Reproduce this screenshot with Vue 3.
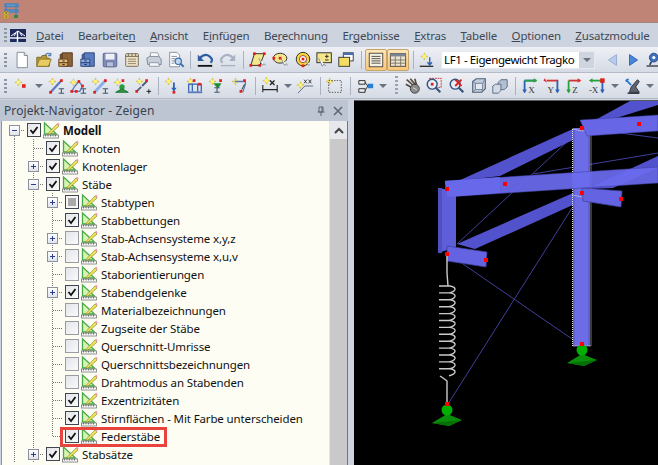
<script setup>
import { computed } from "vue";

const star = (x, y) =>
  `<polygon points="${x},${y - 4} ${x + 1},${y - 1} ${x + 4},${y} ${x + 1},${y + 1} ${x},${y + 4} ${x - 1},${y + 1} ${x - 4},${y} ${x - 1},${y - 1}" fill="#f7e84a" stroke="#b9a92a" stroke-width=".5"/><circle cx="${x}" cy="${y}" r="2" fill="#fff27a"/>`;
const dot = (x, y, s = 3) => `<rect x="${x - s / 2}" y="${y - s / 2}" width="${s}" height="${s}" fill="#e0201c"/>`;
const ibeam = (x, y) =>
  `<path d="M${x - 3} ${y}h6M${x} ${y}v5M${x - 3} ${y + 5}h6" stroke="#44566e" stroke-width="1.2" fill="none"/>`;

const icons = {
  new: `<path d="M4.5 1.5h8l3.5 3.5v13.5h-11.500z" fill="#fff" stroke="#7d8592"/><path d="M12.500 1.500v3.500h3.500" fill="#e4e8ee" stroke="#7d8592"/>`,
  open: `<path d="M2 7h5l1 -2h5v3h3v9h-14z" fill="#b99a3a" stroke="#7a6420"/><path d="M2 17l3-8h13l-3 8z" fill="#e8cc62" stroke="#8a7428"/><path d="M11 5q3-4 6-1.500M17.500 2v3h-3" fill="none" stroke="#5c85b8" stroke-width="1.400"/>`,
  cab: `<path d="M6 2h11v15h-11z" fill="#8d6238" stroke="#4f351b"/><path d="M6 2l-3 2v13h3z" fill="#6d4a28"/><path d="M2 9h10v4h-10z" fill="#e9c27c" stroke="#5c3f20"/><path d="M2 13h10v4h-10z" fill="#d6a860" stroke="#5c3f20"/><rect x="6" y="10.500" width="2.500" height="1" fill="#222"/><rect x="6" y="14.500" width="2.500" height="1" fill="#222"/>`,
  cabBlue: `<path d="M6 2h11v15h-11z" fill="#5a7cc0" stroke="#2c4274"/><path d="M6 2l-3 2v13h3z" fill="#3f5c9a"/><path d="M2 9h10v4h-10z" fill="#8eaee8" stroke="#2c4274"/><path d="M2 13h10v4h-10z" fill="#7295d8" stroke="#2c4274"/><rect x="6" y="10.500" width="2.500" height="1" fill="#123"/><rect x="6" y="14.500" width="2.500" height="1" fill="#123"/>`,
  save: `<rect x="2.500" y="2.500" width="15" height="15" rx="1" fill="#7f8cc0" stroke="#56608e"/><rect x="5" y="3" width="10" height="6.500" fill="#eef0f6"/><rect x="6" y="12" width="8" height="5.500" fill="#b8bfd8" stroke="#6a7398"/>`,
  notes: `<rect x="3" y="3" width="14" height="14" rx="1" fill="#efe3c8" stroke="#6f6350"/><path d="M3 6h14" stroke="#6f6350"/><path d="M5.500 9h9M5.500 11.500h9M5.500 14h9" stroke="#8b7d62"/><path d="M6 3v3M10 3v3M14 3v3" stroke="#6f6350"/>`,
  print: `<path d="M6 2h8l2 5h-10z" fill="#fff" stroke="#8d95a3"/><path d="M2 8l3-2h10l3 3v6h-15z" fill="#c9d0dc" stroke="#7c8493"/><path d="M5 13h10l1 4h-11z" fill="#f5f6f8" stroke="#8d95a3"/>`,
  preview: `<path d="M3 1.500h8l3 3v13h-11z" fill="#fff" stroke="#80899a"/><path d="M5 6h6M5 8.500h4M5 11h4M5 13.500h3" stroke="#7a8290"/><circle cx="12.500" cy="11.500" r="3.500" fill="#bcd8f2" stroke="#3c6ea8" stroke-width="1.300"/><path d="M15 14l3.500 3.500" stroke="#3c6ea8" stroke-width="2"/>`,
  undo: `<path d="M4 8q6-6 11-2t1 7" fill="none" stroke="#2d5ca0" stroke-width="2.400"/><path d="M2 4v7h7z" fill="#2d5ca0"/><rect x="2" y="15.500" width="16" height="2" fill="#111"/>`,
  redo: `<path d="M16 8q-6-6-11-2t-1 7" fill="none" stroke="#a9b2c2" stroke-width="2.400"/><path d="M18 4v7h-7z" fill="#a9b2c2"/><rect x="2" y="15.500" width="16" height="1.500" fill="#a9b2c2"/>`,
  plane: `<path d="M6 3h11l-5 13h-10z" fill="#f4e68a" stroke="#222"/>${dot(6, 3)}${dot(17, 3)}${dot(12, 16)}${dot(2, 16)}<path d="M11 8l4 8 1.500-2 2 2" fill="#fff" stroke="#7c8493"/>`,
  circ: `<ellipse cx="9" cy="8" rx="7.500" ry="5.500" fill="#f4e68a" stroke="#222"/>${dot(2, 8)}${dot(9, 8)}<path d="M10 8l4 8 1.500-2 2 2" fill="#fff" stroke="#7c8493"/>`,
  ring: `<circle cx="10" cy="9" r="7.500" fill="#f2d83c" stroke="#222"/><circle cx="10" cy="9" r="4" fill="#fff" stroke="#a33"/>${dot(10, 9)}${dot(10, 16.500)}<path d="M13 10l3 6 1.500-1" fill="#fff" stroke="#7c8493"/>`,
  note: `<rect x="1" y="2" width="16" height="11" fill="#f4e68a" stroke="#222"/><path d="M10 6h4M12 4v4M10 10h4" stroke="#222"/><path d="M3 8l4 9 1.500-2.500 2.500 2" fill="#fff" stroke="#7c8493"/>`,
  windows: `<rect x="7" y="2" width="11" height="9" fill="#fff" stroke="#333"/><rect x="7" y="2" width="11" height="2.500" fill="#4a6fb0"/><rect x="2" y="7" width="12" height="10" fill="#f4dd62" stroke="#333"/>`,
  nav: `<rect x="2.500" y="2.500" width="15" height="15" fill="#f4f1e6" stroke="#4a4238"/><path d="M5 6h10M5 8.500h10M5 11h10M5 13.500h10" stroke="#4a4238"/>`,
  table: `<rect x="1.500" y="3" width="17" height="14" fill="#ece5d3" stroke="#4a4238"/><rect x="1.500" y="3" width="17" height="3" fill="#7c8594"/><path d="M7 6v11M13 6v11M2 10h16M2 13.500h16" stroke="#7a7060"/>`,
  load: `${star(7, 6)}<path d="M13 7v8M10.500 12.500l2.500 3 2.500-3" fill="none" stroke="#2c62b4" stroke-width="1.500"/><path d="M2 17h15" stroke="#333" stroke-width="1.500"/>`,
  left: `<path d="M15 4v12l-9-6z" fill="#b9cbea" stroke="#93a9d0"/>`,
  right: `<path d="M5 4v12l9-6z" fill="#4a86d8" stroke="#2c62b4"/>`,
  help: `<circle cx="11" cy="7" r="5.500" fill="#3d70c0" stroke="#1c3c78"/><circle cx="11" cy="7" r="2" fill="#fff"/><path d="M8 12l-2 4" stroke="#1c3c78" stroke-width="2"/><path d="M2 17.500h16" stroke="#222" stroke-width="1.500"/>`,
  nodeNew: `${star(6, 6)}${dot(12, 10, 4)}`,
  member: `${star(6, 5)}<path d="M4 17l12-13" stroke="#5a78bc" stroke-width="2.400"/>${dot(4, 17)}${dot(16, 4)}${ibeam(16, 13)}`,
  poly: `${star(5, 6)}<path d="M3 16l3-5 5-6 4 5-3 6z" fill="none" stroke="#5a78bc" stroke-width="1.400"/>${dot(3, 16)}${dot(11, 5)}${dot(15, 10)}${dot(8, 16)}${ibeam(16, 13)}`,
  member2: `${star(5, 5)}<path d="M4 17l12-13" stroke="#8ab0e8" stroke-width="3.200"/>${dot(16, 4)}${dot(4, 17)}${ibeam(16, 13)}`,
  support: `${star(5, 6)}${dot(11, 4)}<circle cx="10" cy="11" r="3" fill="#2a9a42"/><path d="M3 17l7-4 7 4z" fill="#2a9a42" stroke="#14702c"/>`,
  chain: `${star(6, 5)}<path d="M3 16l5-5M9 10l5-5" stroke="#4c5e7e" stroke-width="2"/>${dot(3, 16)}${dot(14, 4)}<path d="M14 16h5M16.500 13.500v5" stroke="#111"/>`,
  down: `${star(5, 5)}<path d="M11 6v9" stroke="#2c62b4" stroke-width="2"/><path d="M8 12l3 4 3-4" fill="#2c62b4"/>${dot(11, 17)}`,
  frame: `${star(5, 5)}<path d="M3 16v-8h14v8M7 8v8M13 8v8" fill="none" stroke="#2c62b4" stroke-width="1.400"/><path d="M2 17h16" stroke="#5a78bc" stroke-width="2"/>${dot(9, 4)}${dot(15, 8)}`,
  tree: `${star(5, 5)}<path d="M6 7h9l-4 6z" fill="#1f8a36"/>${dot(14, 4)}${ibeam(10, 12)}`,
  link: `${star(5, 5)}<path d="M4 5h12v3l-3 9" fill="none" stroke="#5a78bc" stroke-width="1.400"/>${dot(15, 4)}${dot(11, 16)}<path d="M15 8l-3 6" stroke="#222"/>`,
  dim: `${star(6, 4)}<path d="M10 4l5 5M15 4l-5 5" stroke="#222" stroke-width="1.500"/><path d="M2 9v8M18 9v8M2 14h16" stroke="#222" stroke-width="1.200"/>`,
  xx: `${star(5, 9)}<path d="M2 18l8-8h9" stroke="#55657e" fill="none"/><path d="M9 3l3 4M12 3l-3 4M14 3l3 4M17 3l-3 4" stroke="#333"/>`,
  grid: `${star(4, 5)}<rect x="3" y="4" width="14" height="13" fill="none" stroke="#444" stroke-dasharray="1.500 1.500"/>`,
  swap: `<path d="M2 4h7v4h-7zM2 13h7v4h-7z" fill="#eceef3" stroke="#222"/><path d="M9 6l3 4M9 15l3-5" stroke="#222"/><rect x="12" y="7.500" width="6" height="5" fill="#2c7cd0"/>`,
  hand: `<path d="M3 3l8 7M7 2l6 7M12 2l2 7M2 8l7 4" stroke="#54483c" stroke-width="1.800"/><circle cx="12" cy="13" r="5" fill="#8d8d8d" stroke="#3c3c3c"/><path d="M10 12l4 2" stroke="#ddd"/>`,
  zoomArea: `<rect x="5" y="1.500" width="13" height="10" fill="none" stroke="#c22" stroke-dasharray="2 1"/><circle cx="8" cy="8" r="5.500" fill="#e6eef8" stroke="#34547e" stroke-width="1.600"/><path d="M12 12l5 5" stroke="#34547e" stroke-width="2.400"/>${dot(8, 8)}`,
  zoomX: `<circle cx="8" cy="8" r="5.500" fill="#e6eef8" stroke="#34547e" stroke-width="1.600"/><path d="M12 12l5 5" stroke="#34547e" stroke-width="2.400"/><path d="M8 3l7 7M15 3l-7 7" stroke="#d22" stroke-width="2"/>`,
  cube: `<path d="M3 5l4-3h10v11l-4 4h-10z" fill="#c3cddb" stroke="#4f6078" stroke-width="1.200"/><path d="M6 7h8v7h-8z" fill="#e4e9f0" stroke="#6c7c92"/><path d="M3 5l3 2M17 2l-3 5M3 17l3-3M13 17l1-3" stroke="#6c7c92"/>`,
  cubes: `<path d="M8 6l3-3h7v8l-3 3h-7z" fill="#b2bfd2" stroke="#56677e"/><path d="M2 10l3-2h6v7l-3 3h-6z" fill="#d4dbe6" stroke="#56677e"/>`,
  axX: `<path d="M4 17v-13M4 4h13" stroke="#2c62b4" stroke-width="2"/><path d="M4 4h13" stroke="#26a33a" stroke-width="2"/><path d="M1.500 14l2.500 4 2.500-4" fill="#2c62b4"/><path d="M14 1.500l4 2.500-4 2.500" fill="#26a33a"/><text x="8" y="18" class="ax">X</text>`,
  axY: `<path d="M4 4h13" stroke="#d23434" stroke-width="2"/><path d="M16 4v13" stroke="#2c62b4" stroke-width="2"/><path d="M2 1.500l-1.500 2.500 4 2.500z" fill="#d23434"/><path d="M13.500 14l2.500 4 2.500-4" fill="#2c62b4"/><text x="5" y="18" class="ax">Y</text>`,
  axZ: `<path d="M4 4h13" stroke="#d23434" stroke-width="2"/><path d="M4 4v13" stroke="#26a33a" stroke-width="2"/><path d="M14 1.500l4 2.500-4 2.500" fill="#d23434"/><path d="M1.500 14l2.500 4 2.500-4" fill="#26a33a"/><text x="8" y="18" class="ax">Z</text>`,
  axMx: `<path d="M3 4h13" stroke="#26a33a" stroke-width="2"/><path d="M16 4v13" stroke="#2c62b4" stroke-width="2"/><path d="M5 1.500l-4 2.500 4 2.500" fill="#26a33a"/>${dot(16, 4, 5)}<path d="M13.500 14l2.500 4 2.500-4" fill="#2c62b4"/><text x="1" y="18" class="ax">-X</text>`,
  iso: `<path d="M2 3l6 6M5 2l-3 3" stroke="#2c7cd0" stroke-width="2"/><path d="M8 11l7-8 2 2-4 6 4 6h-11z" fill="#5e6470" stroke="#2a2e36"/><path d="M4 18h13" stroke="#2a2e36" stroke-width="1.600"/>`,
};

const tb1 = [
  ["new", 22], ["open", 22], ["cab", 22], ["cabBlue", 22], ["save", 22], ["notes", 22], ["print", 22], ["preview", 22],
  ["|", 7], ["undo", 22], ["redo", 24], ["|", 6], ["plane", 24], ["circ", 22], ["ring", 22], ["note", 21], ["windows", 22], ["|", 8],
  ["nav", 22, true], ["table", 22, true], ["|", 8], ["load", 20],
];
const tb1End = [["left", 22], ["right", 22], ["help", 16]];
const tb2 = [
  ["nodeNew", 22], ["v", 12], ["member", 22], ["poly", 22], ["member2", 22], ["support", 21], ["chain", 22], ["|", 8],
  ["down", 21], ["frame", 23], ["tree", 22], ["link", 23], ["|", 8], ["dim", 22], ["v", 14], ["xx", 20], ["|", 10], ["grid", 20], ["|", 10],
  ["swap", 22], ["v", 12], [":", 14], ["hand", 20], ["zoomArea", 22], ["zoomX", 23], ["cube", 21], ["cubes", 22], ["|", 8],
  ["axX", 22], ["axY", 22], ["axZ", 21], ["axMx", 26], ["v", 10], ["iso", 25], ["v", 10],
];

const menu = [
  ["", "D", "atei"], ["Bearbeite", "n", ""], ["", "A", "nsicht"], ["E", "i", "nfügen"], ["Be", "r", "echnung"],
  ["Er", "g", "ebnisse"], ["", "E", "xtras"], ["", "T", "abelle"], ["", "O", "ptionen"], ["", "Z", "usatzmodule"],
];

// level, label, expander (+/-/""), check state, connector
const rows = [
  { l: 0, t: "Modell", x: "-", c: 1, bold: true },
  { l: 1, t: "Knoten", c: 1 },
  { l: 1, t: "Knotenlager", x: "+", c: 1 },
  { l: 1, t: "Stäbe", x: "-", c: 1 },
  { l: 2, t: "Stabtypen", x: "+", c: 2 },
  { l: 2, t: "Stabbettungen", c: 1 },
  { l: 2, t: "Stab-Achsensysteme x,y,z", x: "+", c: 0 },
  { l: 2, t: "Stab-Achsensysteme x,u,v", x: "+", c: 0 },
  { l: 2, t: "Staborientierungen", c: 0 },
  { l: 2, t: "Stabendgelenke", x: "+", c: 1 },
  { l: 2, t: "Materialbezeichnungen", c: 0 },
  { l: 2, t: "Zugseite der Stäbe", c: 0 },
  { l: 2, t: "Querschnitt-Umrisse", c: 0 },
  { l: 2, t: "Querschnittsbezeichnungen", c: 0 },
  { l: 2, t: "Drahtmodus an Stabenden", c: 0 },
  { l: 2, t: "Exzentrizitäten", c: 1 },
  { l: 2, t: "Stirnflächen - Mit Farbe unterscheiden", c: 1 },
  { l: 2, t: "Federstäbe", c: 1, last: true, mark: true },
  { l: 1, t: "Stabsätze", x: "+", c: 1 },
];

const guides = (row) => {
  const cells = [];
  for (let i = 0; i < row.l; i++) cells.push("g-v");
  const own = row.l === 0 ? "g-start" : row.last ? "g-l" : "g-t";
  cells.push(own);
  return cells;
};

const springPath = computed(() => {
  let d = "M447 254L447 272L448 285";
  for (let i = 0; i < 13; i++) {
    const y = 285 + i * 6.9;
    d += `M439 ${y}H450Q455.500 ${y + 1} 455 ${y + 3.500}Q454 ${y + 6} 449 ${y + 6.900}`;
  }
  d += "M440 375L443 377L447 380V403";
  return d;
});

const nodes = [
  [447, 188], [505, 183], [582, 127], [639, 123], [582, 192], [621, 198], [447, 253], [486, 259], [447, 403], [582, 343],
];
</script>

<template>
  <div class="app">
    <header class="titlebar">
      <svg class="app-icon" viewBox="0 0 18 18" width="18" height="18">
        <path d="M3 2h13v2.500h-13zM3 8h13v2h-13zM4 3v10M14 3v11" stroke="#4a82b8" stroke-width="1.400" fill="#6fa3d4" />
        <rect x="12" y="13" width="4" height="3" fill="#2e8a3e" />
        <text x="1" y="17" class="app-eight">8</text>
      </svg>
    </header>

    <nav class="menubar">
      <span class="grip"></span>
      <svg class="logo" viewBox="0 0 16 13" width="16" height="13">
        <rect width="16" height="13" fill="#1c2a5c" />
        <path d="M1 7L8 2l7 5M4 7l2-3M12 7l-2-3" stroke="#fff" fill="none" />
        <path d="M0 9h16" stroke="#fff" stroke-width="1.400" />
        <path d="M7.500 2v11" stroke="#fff" stroke-width="1.400" />
      </svg>
      <span v-for="m in menu" :key="m[1] + m[2]" class="menu-item">{{ m[0] }}<u>{{ m[1] }}</u>{{ m[2] }}</span>
    </nav>

    <div class="toolbar">
      <span class="grip"></span>
      <template v-for="(it, i) in tb1" :key="i">
        <span v-if="it[0] === '|'" class="sep" :style="{ width: it[1] + 'px' }"></span>
        <span v-else class="cell" :class="{ on: it[2] }" :style="{ width: it[1] + 'px' }">
          <svg viewBox="0 0 20 20" width="18" height="18" v-html="icons[it[0]]"></svg>
        </span>
      </template>
      <div class="combo">
        <span class="combo-text">LF1 - Eigengewicht Tragko</span>
        <span class="combo-btn"><i class="tri"></i></span>
      </div>
      <span class="nudge"></span>
      <span v-for="it in tb1End" :key="it[0]" class="cell" :style="{ width: it[1] + 'px' }">
        <svg viewBox="0 0 20 20" width="18" height="18" v-html="icons[it[0]]"></svg>
      </span>
    </div>

    <div class="toolbar second">
      <span class="grip"></span>
      <template v-for="(it, i) in tb2" :key="i">
        <span v-if="it[0] === '|'" class="sep" :style="{ width: it[1] + 'px' }"></span>
        <span v-else-if="it[0] === 'v'" class="drop" :style="{ width: it[1] + 'px' }"><i class="tri"></i></span>
        <span v-else-if="it[0] === ':'" class="inner-grip" :style="{ width: it[1] + 'px' }"></span>
        <span v-else class="cell" :style="{ width: it[1] + 'px' }">
          <svg viewBox="0 0 20 20" width="18" height="18" v-html="icons[it[0]]"></svg>
        </span>
      </template>
    </div>

    <main class="workspace">
      <section class="panel">
        <div class="panel-head">
          <span>Projekt-Navigator - Zeigen</span>
          <span class="panel-tools">
            <svg viewBox="0 0 10 10" width="10" height="10">
              <path d="M3 1h4v5h-4zM1.500 6h7M5 6v4M6 1v5" stroke="#5b6470" fill="none" />
            </svg>
            <svg viewBox="0 0 10 10" width="10" height="10">
              <path d="M1 1l8 8M9 1l-8 8" stroke="#5b6470" stroke-width="1.500" />
            </svg>
          </span>
        </div>
        <div class="panel-body">
          <ul class="tree">
            <li v-for="row in rows" :key="row.t" class="row">
              <span v-for="(g, i) in guides(row)" :key="i" class="guide" :class="g">
                <span v-if="i === row.l && row.x" class="expander">
                  <svg viewBox="0 0 9 9" width="9" height="9">
                    <path :d="row.x === '+' ? 'M2 4.500h5M4.500 2v5' : 'M2 4.500h5'" stroke="#2b3c92" />
                  </svg>
                </span>
              </span>
              <span class="entry" :class="{ marked: row.mark }">
                <span class="check" :class="{ 'is-on': row.c === 1, 'is-mixed': row.c === 2 }">
                  <svg v-if="row.c === 1" viewBox="0 0 12 12" width="12" height="12">
                    <path d="M2.500 6l2.500 3 4.500-6" fill="none" stroke="#111" stroke-width="1.800" />
                  </svg>
                </span>
                <svg class="show-icon" viewBox="0 0 18 18" width="18" height="18">
                  <path d="M2.500 2v11h12z" fill="#d4f4b0" stroke="#4aa84a" stroke-width="1.300" />
                  <path d="M5.500 13l9.500-10 2 2-9 8z" fill="#f2e65c" stroke="#8a8828" stroke-width=".7" />
                  <path d="M15 3l1-1.500 1.500 1.500-.5 2z" fill="#ef9ab8" />
                  <rect x="1.500" y="14" width="15" height="3" fill="#fff" stroke="#777" stroke-width=".8" />
                  <path d="M3.500 14v1.500M6 14v1.500M8.500 14v1.500M11 14v1.500M13.500 14v1.500" stroke="#555" stroke-width=".8" />
                </svg>
                <span class="label" :class="{ bold: row.bold }">{{ row.t }}</span>
              </span>
            </li>
          </ul>
          <div class="scrollbar">
            <span class="scroll-up">
              <svg viewBox="0 0 10 7" width="10" height="7">
                <path d="M1 6l4-4 4 4" fill="none" stroke="#444" stroke-width="2" />
              </svg>
            </span>
            <span class="thumb"></span>
          </div>
        </div>
      </section>

      <div class="view">
        <svg class="scene" viewBox="354 100 304 365" width="304" height="365">
          <!-- thin bracing behind the frame -->
          <g stroke="#3f3f9c" stroke-width="1" fill="none">
            <path d="M457 243L570 138" />
            <path d="M533 173L658 152" />
            <path d="M620 132L658 137" />
            <path d="M463 263L575 340" />
            <path d="M572 207L448 403" />
          </g>

          <!-- rafters -->
          <polygon points="458,180 575,127 577,137 500,175" fill="#5252cc" />
          <polygon points="597,118 630,100 658,100 658,104 613,118" fill="#5252cc" />
          <polygon points="587,188 658,155 658,167 613,187" fill="#5252cc" />
          <polygon points="457,243 573,192 575,203 475,248" fill="#5252cc" />

          <!-- column with selection outline -->
          <rect x="573" y="127" width="17" height="218" fill="#6c6ce6" />
          <path d="M574 127V345M589 127V345" stroke="#5c5cd0" stroke-width="1.500" />
          <path d="M572.500 128V345H591V128M572.500 128L582 130L591 128M572.500 194L582 196L591 194" class="selection" />

          <!-- front beams -->
          <polygon points="580,119 658,114 658,130 587,135" fill="#6666e6" stroke="#3d3d98" stroke-width=".5" />
          <polygon points="582,187 622,190 621,206 583,200" fill="#6464e2" stroke="#3d3d98" stroke-width=".7" />
          <polygon points="445,180 658,166 658,182 447,196" fill="#6a6aee" fill-opacity=".93" stroke="#3d3d98" stroke-width=".5" />

          <!-- left stub -->
          <polygon points="438,187 456,190 456,246 438,252" fill="#5e5ed8" />
          <rect x="438" y="187" width="4" height="65" fill="#5050c2" />
          <polygon points="445,180 500,176 500,192 447,196" fill="#6868ea" />
          <polygon points="447,245 487,251 486,266 447,260" fill="#6464e2" stroke="#3d3d98" stroke-width=".7" />

          <!-- spring -->
          <path :d="springPath" fill="none" stroke="#c9c9c9" stroke-width="1.400" />

          <!-- supports -->
          <g v-for="s in [[447, 409], [582, 349]]" :key="s[0]">
            <polygon
              :points="`${s[0] - 15},${s[1] + 13} ${s[0]},${s[1] + 4} ${s[0] + 15},${s[1] + 10} ${s[0] + 2},${s[1] + 16}`"
              fill="#0a8f0a"
            />
            <polygon
              :points="`${s[0] - 15},${s[1] + 13} ${s[0] + 15},${s[1] + 10} ${s[0] + 2},${s[1] + 16}`"
              fill="#067006"
            />
            <circle :cx="s[0]" :cy="s[1]" r="5.500" fill="#00b000" />
          </g>

          <rect v-for="n in nodes" :key="n[0] + '-' + n[1]" :x="n[0] - 2" :y="n[1] - 2" width="4" height="4" fill="#ff0000" />
        </svg>
      </div>
    </main>
  </div>
</template>

<style scoped>
.app {
  width: 658px;
  height: 465px;
  overflow: hidden;
  display: flex;
  flex-direction: column;
  background: #cdd4df;
  font-family: "Noto Sans", "Open Sans", sans-serif;
  font-size: 11.5px;
  letter-spacing: -0.13px;
}

.titlebar {
  height: 22px;
  flex: none;
  background: #c08476;
  border-bottom: 1px solid #a4867e;
  display: flex;
  align-items: center;
  padding-left: 2px;
}
.app-eight {
  font-family: "Liberation Sans", sans-serif;
  font-weight: 700;
  font-size: 11px;
  fill: #e8c82a;
  stroke: #6b5a10;
  stroke-width: 0.3px;
}

.menubar {
  height: 24px;
  flex: none;
  display: flex;
  align-items: center;
  padding-left: 4px;
  background: #cdd4df;
  color: #3f4855;
  letter-spacing: -0.2px;
}
.menubar .grip {
  margin-right: 3px;
}
.logo {
  margin-right: 10px;
  flex: none;
}
.menu-item {
  margin-right: 14.5px;
  white-space: nowrap;
}
.grip {
  width: 3px;
  height: 14px;
  flex: none;
  margin-right: 4px;
  background: repeating-linear-gradient(#8d96a4 0 2px, transparent 2px 4px);
}

.toolbar {
  height: 25px;
  flex: none;
  display: flex;
  align-items: center;
  padding-left: 4px;
  background: linear-gradient(#eef0f5, #d5dbe5);
  border-bottom: 1px solid #b4bbc7;
  overflow: hidden;
}
.second {
  height: 25px;
}
.cell {
  height: 22px;
  flex: none;
  display: flex;
  align-items: center;
  justify-content: center;
  box-sizing: border-box;
}
.cell.on {
  background: linear-gradient(#fde7b8, #f8c77a);
  border: 1px solid #c9a468;
  border-radius: 2px;
}
.sep {
  height: 18px;
  flex: none;
  background: linear-gradient(#aab2bf, #aab2bf) center / 1px 100% no-repeat;
}
.drop {
  height: 20px;
  flex: none;
  display: flex;
  align-items: center;
  justify-content: center;
}
.inner-grip {
  height: 20px;
  flex: none;
  background: repeating-linear-gradient(#9aa3b1 0 2px, transparent 2px 4px) center / 3px 100% no-repeat;
}
.tri {
  width: 0;
  height: 0;
  border-left: 4px solid transparent;
  border-right: 4px solid transparent;
  border-top: 4px solid #6b7280;
}

.combo {
  width: 154px;
  height: 18px;
  margin-left: 4px;
  flex: none;
  display: flex;
  background: #fff;
  border: 1px solid #e6e9ef;
  box-sizing: border-box;
  color: #000;
}
.combo-text {
  flex: 1;
  padding-left: 2px;
  line-height: 16px;
  white-space: nowrap;
  letter-spacing: -0.4px;
}
.combo-btn {
  width: 15px;
  flex: none;
  background: #cfd5de;
  display: flex;
  align-items: center;
  justify-content: center;
}
.nudge {
  width: 6px;
  flex: none;
}

.workspace {
  flex: 1;
  min-height: 0;
  display: flex;
  margin-top: 1px;
}

.panel {
  width: 354px;
  flex: none;
  display: flex;
  flex-direction: column;
  min-height: 0;
  padding-right: 6px;
  box-sizing: border-box;
}
.panel-head {
  height: 21px;
  flex: none;
  display: flex;
  align-items: center;
  justify-content: space-between;
  padding: 0 5px 0 4px;
  background: #bcc5d1;
  color: #3b424d;
  font-size: 12px;
  letter-spacing: 0.1px;
}
.panel-tools {
  display: flex;
  gap: 7px;
}
.panel-body {
  flex: 1;
  min-height: 0;
  display: flex;
  margin-left: 1px;
  background: #fdfdf4;
  border-left: 1px solid #8d94a0;
  border-right: 1px solid #6f7681;
}
.tree {
  list-style: none;
  margin: 0;
  padding: 0 0 0 3px;
  flex: 1;
  min-width: 0;
  overflow: hidden;
}
.row {
  height: 18px;
  display: flex;
  align-items: center;
}
.guide {
  width: 19px;
  height: 18px;
  flex: none;
  display: flex;
  align-items: center;
  justify-content: center;
  background-repeat: no-repeat;
}
.g-v {
  background-image: repeating-linear-gradient(#777 0 1px, transparent 1px 2px);
  background-size: 1px 100%;
  background-position: center;
}
.g-t {
  background-image: repeating-linear-gradient(#777 0 1px, transparent 1px 2px),
    repeating-linear-gradient(90deg, #777 0 1px, transparent 1px 2px);
  background-size: 1px 100%, 50% 1px;
  background-position: center, right center;
}
.g-l {
  background-image: repeating-linear-gradient(#777 0 1px, transparent 1px 2px),
    repeating-linear-gradient(90deg, #777 0 1px, transparent 1px 2px);
  background-size: 1px 50%, 50% 1px;
  background-position: center top, right center;
}
.g-start {
  background-image: repeating-linear-gradient(#777 0 1px, transparent 1px 2px),
    repeating-linear-gradient(90deg, #777 0 1px, transparent 1px 2px);
  background-size: 1px 50%, 50% 1px;
  background-position: center bottom, right center;
}
.expander {
  width: 9px;
  height: 9px;
  display: block;
  outline: 1px solid #8b919c;
  background: linear-gradient(#fff, #dfe3ea);
}
.expander svg {
  display: block;
}
.entry {
  position: relative;
  display: flex;
  align-items: center;
  margin-left: 3px;
  white-space: nowrap;
}
.marked::after {
  content: "";
  position: absolute;
  top: 0;
  bottom: -2px;
  left: -5px;
  right: -7px;
  border: 3px solid #e8433c;
}
.check {
  width: 12px;
  height: 12px;
  flex: none;
  border: 1px solid #9a9ca2;
  background: linear-gradient(135deg, #e3e5ea, #fafafa);
  display: flex;
}
.is-on {
  border-color: #3f4650;
}
.is-mixed {
  border-color: #3f4650;
  box-shadow: inset 0 0 0 2px #f4f4f4;
  background: #a9a9a9;
}
.show-icon {
  margin-left: 1px;
  flex: none;
}
.label {
  margin-left: 3px;
  color: #111;
}
.bold {
  font-weight: 700;
}

.scrollbar {
  width: 17px;
  flex: none;
  display: flex;
  flex-direction: column;
  background: #e6e8ec;
  border-left: 1px solid #e4e4e4;
}
.scroll-up {
  height: 18px;
  flex: none;
  display: flex;
  align-items: center;
  justify-content: center;
}
.thumb {
  flex: 1;
  background: #c9c9c9;
}

.view {
  flex: 1;
  min-width: 0;
  background: #000;
  border-top: 1px solid #5a5a5a;
}
.scene {
  display: block;
}
.selection {
  fill: none;
  stroke: #e8e8e8;
  stroke-width: 1;
  stroke-dasharray: 1 1;
}
</style>

<style>
html,
body {
  margin: 0;
  overflow: hidden;
}
svg text.ax {
  font-family: "Liberation Serif", serif;
  font-size: 10px;
  fill: #333;
}
</style>
